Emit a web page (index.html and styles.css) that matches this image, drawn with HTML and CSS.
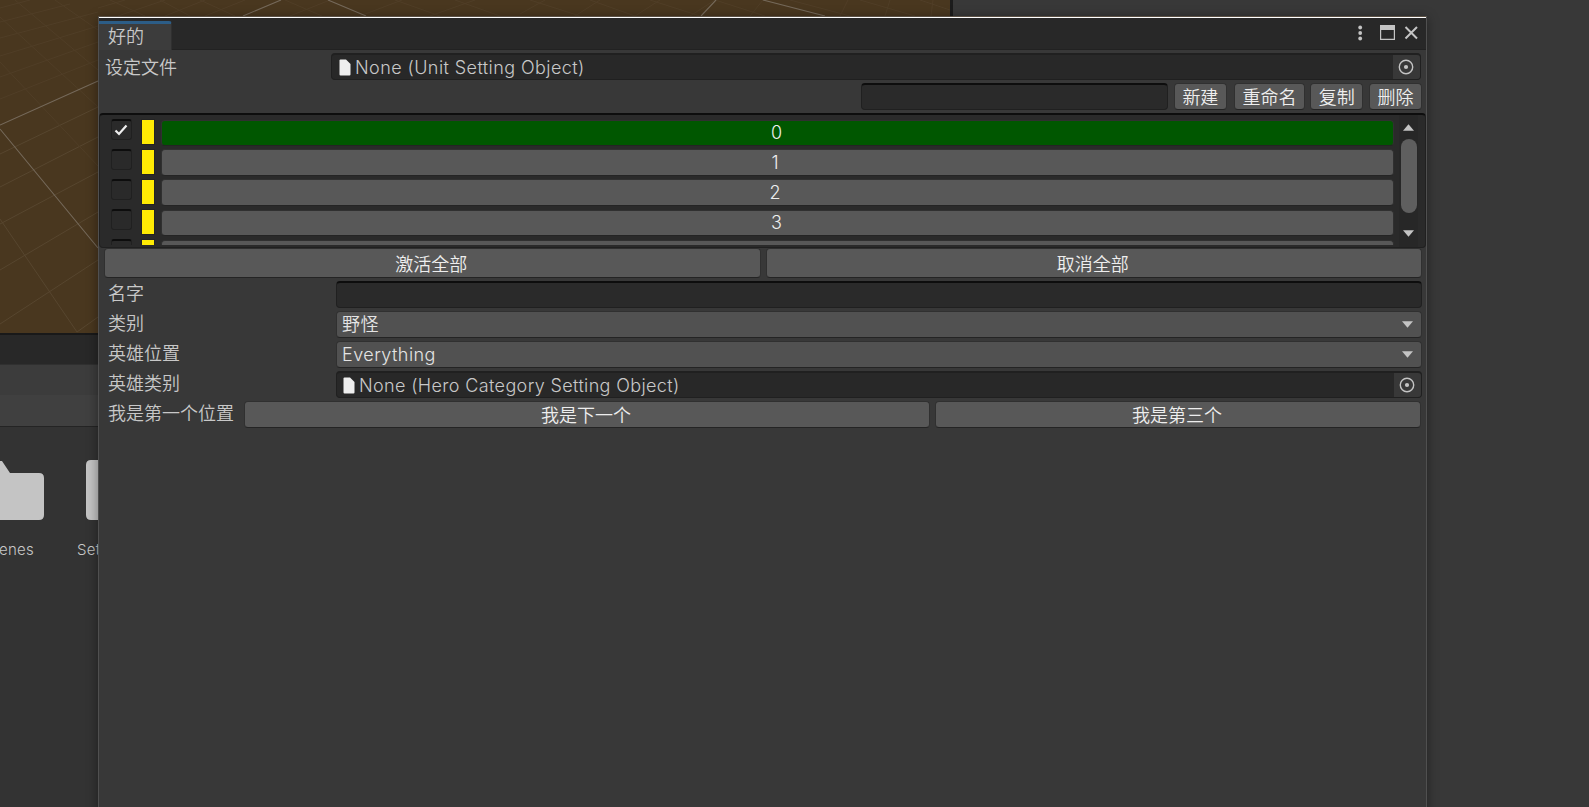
FILE: index.html
```html
<!DOCTYPE html>
<html lang="zh"><head><meta charset="utf-8"><title>好的</title><link rel="stylesheet" href="styles.css"></head>
<body>
<div class="editor">
  <div class="scene-row">
    <svg class="scene" viewBox="0 0 950 333" preserveAspectRatio="none">
      <g class="minor near"><path d="M0 154L98 107M0 187L98 137M0 224L98 172M0 270L98 212M0 324L98 260M77 332L98 317M0 219L77 332"/></g>
      <g class="minor">
        <path d="M0 99L98 60M0 77L98 42M0 56L98 26M0 38L98 12M0 22L70 4M0 8L30 0M0 62L98 166M0 17L98 107M15 0L98 70M55 0L98 30M98 8L125 0M110 0L145 16M118 16L165 0M160 0L190 16M165 16L205 0M200 0L235 16M205 16L245 0M285 0L322 16M290 16L330 0M360 16L402 0M395 0L440 16M430 16L475 0M455 0L500 16M520 14L545 0M530 0L580 16M575 16L600 0M590 0L635 16M635 16L660 0M650 0L700 16M690 16L715 0M715 0L765 16M750 16L763 0M790 0L850 16M840 16L848 0M860 0L915 16M885 16L890 0M920 0L950 10M931 16L933 0"/>
      </g>
      <g class="major"><path d="M0 125L98 81M243 16L281 0M328 0L366 16M0 129L98 248M701 16L716 0M763 0L825 16"/></g>
    </svg>
    <div class="side"></div>
  </div>
  <div class="tabs"></div><div class="bar"></div><div class="bar2"></div>
  <div class="project">
    <svg class="assets" width="110" height="62" viewBox="0 0 110 62"><path d="M0 1H2L10 13H39Q44 13 44 18V55Q44 60 39 60H0ZM91 0H110V60H91Q86 60 86 55V5Q86 0 91 0Z" fill="#c4c4c4"/></svg>
    <div class="names"><span class="n1">enes</span><span class="n2">Settings</span></div>
  </div>
</div>
<div class="window">
  <header class="title"><div class="tab">好的</div>
    <svg class="controls" width="66" height="20" viewBox="0 0 66 20"><g fill="#c4c4c4"><circle cx="5.2" cy="4.5" r="1.9"/><circle cx="5.2" cy="10" r="1.9"/><circle cx="5.2" cy="15.5" r="1.9"/><path d="M25 2H40V17H25ZM26.2 7V15.8H38.8V7Z" fill-rule="evenodd"/></g><path d="M50.5 4L62 15.5M62 4L50.5 15.5" stroke="#c4c4c4" stroke-width="2"/></svg>
  </header>
  <div class="row file"><label>设定文件</label><div class="object"><svg class="doc" width="12" height="17" viewBox="0 0 12 17"><path d="M1.5 .5H7L11.5 5V15.5Q11.5 16.5 10.5 16.5H1.5Q.5 16.5 .5 15.5V1.5Q.5 .5 1.5 .5Z" fill="#eee"/></svg><span>None (Unit Setting Object)</span><i class="picker"><svg width="16" height="16" viewBox="0 0 16 16"><circle cx="8" cy="8" r="6.7" fill="none" stroke="#c4c4c4" stroke-width="1.4"/><circle cx="8" cy="8" r="2.1" fill="#c4c4c4"/></svg></i></div></div>
  <div class="row tools"><div class="input"></div><button class="btn b2">新建</button><button class="btn b3">重命名</button><button class="btn b2 b-copy">复制</button><button class="btn b2 b-del">删除</button></div>
  <div class="list">
    <div class="items">
      <div class="item"><i class="check"><svg width="14" height="12" viewBox="0 0 14 12"><path d="M1.5 6.5L5 10L12.5 1.5" fill="none" stroke="#eee" stroke-width="2.2"/></svg></i><i class="mark"></i><button class="btn on">0</button></div>
      <div class="item"><i class="check"></i><i class="mark"></i><button class="btn odd">1</button></div>
      <div class="item"><i class="check"></i><i class="mark"></i><button class="btn odd">2</button></div>
      <div class="item"><i class="check"></i><i class="mark"></i><button class="btn">3</button></div>
      <div class="item"><i class="check"></i><i class="mark"></i><button class="btn"></button></div>
    </div>
    <div class="scroll"><svg width="11" height="7" viewBox="0 0 10 6"><path d="M0 6L5 0L10 6Z" fill="#c4c4c4"/></svg><div class="thumb"></div><svg width="11" height="7" viewBox="0 0 10 6"><path d="M0 0H10L5 6Z" fill="#c4c4c4"/></svg></div>
  </div>
  <div class="pair"><button class="btn">激活全部</button><button class="btn">取消全部</button></div>
  <div class="form">
    <div class="row"><label>名字</label><div class="input"></div></div>
    <div class="row"><label>类别</label><div class="btn drop"><span>野怪</span><svg width="11" height="7" viewBox="0 0 10 6"><path d="M0 0H10L5 6Z" fill="#c4c4c4"/></svg></div></div>
    <div class="row"><label>英雄位置</label><div class="btn drop"><span>Everything</span><svg width="11" height="7" viewBox="0 0 10 6"><path d="M0 0H10L5 6Z" fill="#c4c4c4"/></svg></div></div>
    <div class="row hero"><label>英雄类别</label><div class="object"><svg class="doc" width="12" height="17" viewBox="0 0 12 17"><path d="M1.5 .5H7L11.5 5V15.5Q11.5 16.5 10.5 16.5H1.5Q.5 16.5 .5 15.5V1.5Q.5 .5 1.5 .5Z" fill="#eee"/></svg><span>None (Hero Category Setting Object)</span><i class="picker"><svg width="16" height="16" viewBox="0 0 16 16"><circle cx="8" cy="8" r="6.7" fill="none" stroke="#c4c4c4" stroke-width="1.4"/><circle cx="8" cy="8" r="2.1" fill="#c4c4c4"/></svg></i></div></div>
    <div class="row last"><label>我是第一个位置</label><button class="btn next">我是下一个</button><button class="btn third">我是第三个</button></div>
  </div>
</div>
</body></html>
```
FILE: styles.css
```css
*{box-sizing:border-box}
body{margin:0;width:1589px;height:807px;overflow:hidden;position:relative;background:#383838;color:#c8c8c8;font:350 18px/24px Inter,"Noto Sans CJK SC",sans-serif}
svg{display:block;flex:none}
i{font-style:normal}
.editor{height:807px;display:flex;flex-direction:column}
.scene-row{height:333px;display:flex}
.scene{width:950px;height:333px;background:#49371f}
.minor{fill:none;stroke:#503e27;stroke-width:1}
.near{stroke:#57462f}
.major{fill:none;stroke:#75695a;stroke-width:1.1}
.side{flex:1;border-left:3px solid #1c1c1c;background:#383838}
.tabs{width:200px;height:31px;background:#282828;border-top:2px solid #191919}
.bar{width:200px;height:31px;background:#3c3c3c;border-top:1px solid #303030}
.bar2{width:200px;height:32px;background:#404040;border-bottom:1px solid #242424}
.project{width:200px;flex:1;background:#333;padding-top:33px;overflow:hidden}
.names{display:flex;font-size:15px;line-height:20px;letter-spacing:.3px;margin-top:18px}
.n1{width:78px;margin-left:-1px}
.window{position:absolute;left:98px;top:16px;width:1329px;height:800px;background:#383838;border:1px solid #505050;border-top-color:#5b5145;box-shadow:0 2px 11px rgba(0,0,0,.4)}
.title{height:33px;background:#282828;border-top:1px solid #fff;border-bottom:1px solid #222;display:flex;justify-content:space-between;align-items:flex-start}
.tab{width:73px;height:29px;margin-top:3px;border-top:3px solid #2c5d87;border-radius:0 3px 0 0;background:#3c3c3c;padding-left:9px;line-height:26px;margin-bottom:-1px;border-right:1px solid #303030}
.controls{margin:5px 5px 0 0}
.row{display:flex}
.file{height:33px;padding:3px 5px 0 6px}
.file label{width:226px;line-height:29px}
.object{flex:1;height:27px;border:1px solid #202020;border-top-width:2px;border-radius:4px;background:#282828;display:flex;align-items:center;padding-left:7px;letter-spacing:.42px}
.object span{padding-top:2px}
.doc{margin-right:4px;margin-top:1px}
.picker{margin-left:auto;width:27px;height:24px;background:#383838;border-radius:0 3px 3px 0;display:flex;align-items:center;justify-content:center;padding-right:2px}
.input{border:1px solid #202020;border-top:2px solid #0d0d0d;border-radius:4px;background:#2a2a2a;height:27px;flex:1}
.btn{font:inherit;color:#eee;background:#585858;border:1px solid #303030;border-bottom-color:#242424;border-radius:4px;padding:0;margin:0;height:27px;text-align:center;line-height:25px}
.tools{height:30px;padding:0 4px 0 762px}
.tools .input{flex:none;width:307px;margin-right:6px}
.tools .btn{padding-top:1px}
.b2{width:53px}.b3{width:72px;margin:0 5px 0 7px}.b-del{margin-left:6px}
.list{height:135px;border:1px solid #202020;border-top:2px solid #0d0d0d;border-radius:4px;background:#2a2a2a;display:flex;overflow:hidden}
.items{width:1294px;padding:4px 0 0 11px;height:130px;overflow:hidden}
.item{height:30px;display:flex;align-items:flex-start}
.check{width:21px;height:21px;border:1px solid #202020;border-top:2px solid #0d0d0d;border-radius:3px;background:#2a2a2a;display:flex;align-items:center;justify-content:center}
.check svg{margin:-1px 1px 0 0}
.mark{width:14px;height:26px;border:1px solid #242424;background:#ffeb04;margin:0 6px 0 9px}
.item .btn{flex:1;height:26px;margin-top:1px;padding-right:2px;line-height:24px}
.item .odd{height:27px;margin-top:0;padding-right:5px;line-height:25px}
.item .on{background:#005700}
.scroll{width:19px;margin-left:5px;background:#272727;display:flex;flex-direction:column;align-items:center;padding-top:9px}
.thumb{width:16px;height:74px;border-radius:8px;background:#5f5f5f;margin:8px 0 17px}
.pair{display:flex;gap:5px;padding:0 4px 0 5px}
.pair .btn{flex:1;height:30px;padding-top:3px;padding-right:2px}
.form{padding:3px 4px 0 9px}
.form .row{height:30px}
.form label{width:228px;line-height:25px}
.drop{flex:1;display:flex;align-items:center;text-align:left;padding:0 8px 0 5px;background:#515151;justify-content:space-between;color:#e4e4e4;letter-spacing:.45px}
.hero .object{letter-spacing:.36px;padding-left:6px}
.form .last label{width:136px}
.last .btn{padding:1px 2px 0 0}
.next{width:686px}.third{width:486px;margin-left:5px}
```
